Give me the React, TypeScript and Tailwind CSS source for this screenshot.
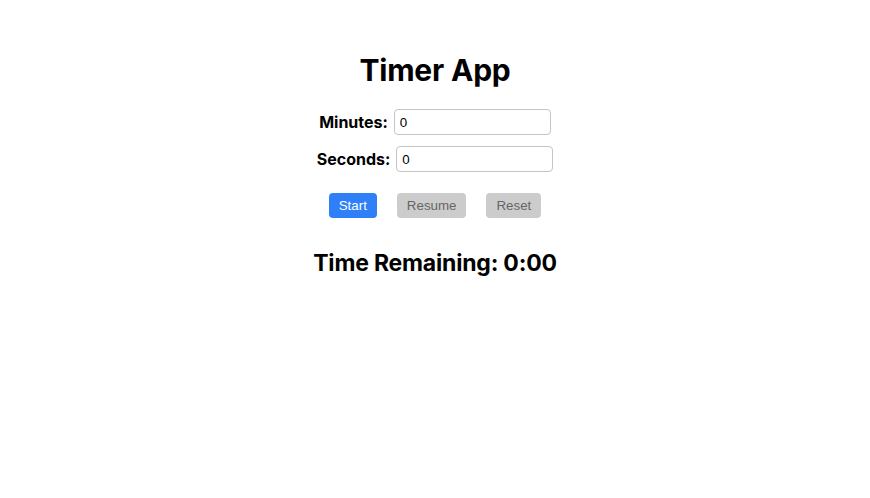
import { useState } from "react";

export default function App() {
  const [minutes, setMinutes] = useState("0");
  const [seconds, setSeconds] = useState("0");

  return (
    <div className="min-h-screen bg-white font-['Inter',sans-serif] text-black">
      <div className="flex flex-col items-center pt-[51px]">
        <h1 className="text-[30px] font-bold leading-[38px] mb-[20px] tracking-[-0.2px]">Timer App</h1>

        <div className="flex flex-col items-center gap-[11px]">
          <div className="flex items-center">
            <label className="text-base font-bold mr-[6px]">Minutes:</label>
            <input
              type="number"
              value={minutes}
              onChange={(e) => setMinutes(e.target.value)}
              className="w-[157px] h-[26px] px-[5px] border border-[#c4c4c4] rounded-[4px] font-['Liberation_Sans',Arial,sans-serif] text-[13.33px] outline-none [appearance:textfield]"
            />
          </div>
          <div className="flex items-center">
            <label className="text-base font-bold mr-[6px]">Seconds:</label>
            <input
              type="number"
              value={seconds}
              onChange={(e) => setSeconds(e.target.value)}
              className="w-[157px] h-[26px] px-[5px] border border-[#c4c4c4] rounded-[4px] font-['Liberation_Sans',Arial,sans-serif] text-[13.33px] outline-none [appearance:textfield]"
            />
          </div>
        </div>

        <div className="flex items-center gap-[20px] mt-[21px] font-['Liberation_Sans',Arial,sans-serif] text-[13.33px]">
          <button className="h-[25px] px-[10px] rounded-[4px] bg-[#2f80f8] text-white">Start</button>
          <button className="h-[25px] px-[10px] rounded-[4px] bg-[#cccccc] text-[#666666]">Resume</button>
          <button className="h-[25px] px-[10px] rounded-[4px] bg-[#cccccc] text-[#666666]">Reset</button>
        </div>

        <h2 className="text-[23px] font-bold leading-[28px] mt-[31px] tracking-[-0.2px]">Time Remaining: 0:00</h2>
      </div>
    </div>
  );
}
